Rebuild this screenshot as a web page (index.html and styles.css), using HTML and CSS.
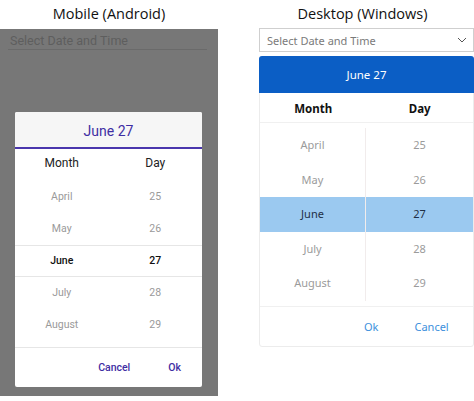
FILE: index.html
```html
<!DOCTYPE html>
<html>
<head>
<meta charset="utf-8">
<link rel="stylesheet" href="styles.css">
</head>
<body>
<div class="page">
  <section class="col mobile">
    <h2 class="title">Mobile (Android)</h2>
    <div class="screen">
      <div class="m-input">Select Date and Time</div>
      <div class="m-dialog">
        <div class="m-head">June 27</div>
        <div class="m-cols"><span>Month</span><span>Day</span></div>
        <div class="m-list">
          <div class="m-row"><span>April</span><span>25</span></div>
          <div class="m-row"><span>May</span><span>26</span></div>
          <div class="m-row sel"><span>June</span><span>27</span></div>
          <div class="m-row"><span>July</span><span>28</span></div>
          <div class="m-row"><span>August</span><span>29</span></div>
        </div>
        <div class="m-foot"><span>Cancel</span><span>Ok</span></div>
      </div>
    </div>
  </section>
  <section class="col desktop">
    <h2 class="title">Desktop (Windows)</h2>
    <div class="d-input">
      <span>Select Date and Time</span>
      <svg class="chev" width="10" height="6" viewBox="0 0 10 6"><path d="M1 1l4 4 4-4" fill="none" stroke="#555" stroke-width="1"/></svg>
    </div>
    <div class="d-dialog">
      <div class="d-head">June 27</div>
      <div class="d-cols"><span>Month</span><span>Day</span></div>
      <div class="d-list">
        <div class="d-col left">
          <div class="d-cell">April</div>
          <div class="d-cell">May</div>
          <div class="d-cell sel">June</div>
          <div class="d-cell">July</div>
          <div class="d-cell">August</div>
        </div>
        <div class="d-col">
          <div class="d-cell">25</div>
          <div class="d-cell">26</div>
          <div class="d-cell sel">27</div>
          <div class="d-cell">28</div>
          <div class="d-cell">29</div>
        </div>
      </div>
      <div class="d-foot"><span>Ok</span><span>Cancel</span></div>
    </div>
  </section>
</div>
</body>
</html>
```

FILE: styles.css
```css
* { box-sizing: border-box; margin: 0; padding: 0; }
html, body { width: 474px; height: 401px; background: #fff; overflow: hidden; }
body { font-family: "Noto Sans", sans-serif; }

.page { display: flex; gap: 41px; }

.col { display: flex; flex-direction: column; }
.mobile { width: 218px; }
.desktop { width: 215px; }

.title {
  height: 29px;
  line-height: 28px;
  text-align: center;
  font-family: "Open Sans", sans-serif;
  font-weight: 400;
  font-size: 14.5px;
  color: #111;
}
.desktop .title { margin-left: -8px; }

/* ---------- Mobile ---------- */
.screen {
  height: 367px;
  background: #777;
  padding: 4px 11px 0 8px;
  font-family: Roboto, sans-serif;
}
.m-input {
  height: 17px;
  padding-left: 2px;
  font-size: 12.5px;
  line-height: 15px;
  color: #5e5e5e;
  border-bottom: 1px solid #6a6a6a;
}
.m-dialog {
  margin: 62px 0 0 7px;
  width: 187px;
  height: 275px;
  background: #fff;
  border-radius: 2px;
  display: flex;
  flex-direction: column;
}
.m-head {
  height: 37px;
  flex: none;
  background: #f6f6f6;
  border-bottom: 2px solid #4a36ad;
  border-radius: 2px 2px 0 0;
  color: #3f2ea3;
  font-size: 14px;
  text-align: center;
  line-height: 38px;
}
.m-cols, .m-row, .m-foot { display: flex; }
.m-cols span, .m-row span { flex: 1; text-align: center; }
.m-cols {
  height: 29px;
  flex: none;
  line-height: 29px;
  font-size: 12px;
  color: #222;
}
.m-list { padding-top: 3px; }
.m-row {
  height: 32px;
  line-height: 32px;
  font-size: 10.5px;
  color: #9a9a9a;
}
.m-row.sel {
  color: #111;
  font-weight: 500;
  border-top: 1px solid #e6e6e6;
  border-bottom: 1px solid #e6e6e6;
  line-height: 30px;
}
.m-foot {
  margin-top: 6px;
  border-top: 1px solid #e6e6e6;
  flex: 1;
  justify-content: flex-end;
  align-items: center;
  gap: 38px;
  padding: 0 21px 0 0;
  font-size: 10.5px;
  font-weight: 500;
  color: #3f2ea3;
}

/* ---------- Desktop ---------- */
.d-input {
  height: 24px;
  margin-top: -1px;
  border: 1px solid #cfcfcf;
  display: flex;
  align-items: center;
  justify-content: space-between;
  padding: 0 6px 0 7px;
  font-size: 11px;
  color: #7a7a7a;
}
.d-dialog {
  margin-top: 4px;
  height: 291px;
  border: 1px solid #ececec;
  border-radius: 3px;
  display: flex;
  flex-direction: column;
}
.d-head {
  height: 37px;
  flex: none;
  margin: -1px -1px 0 -1px;
  background: #0b5ec5;
  color: #fff;
  font-size: 11.5px;
  text-align: center;
  line-height: 37px;
  border-radius: 3px 3px 0 0;
}
.d-cols { display: flex; flex: none; height: 30px; line-height: 31px; border-bottom: 1px solid #f0f0f0; }
.d-cols span { flex: 1; text-align: center; font-weight: 700; font-size: 11.5px; color: #111; }
.d-list { display: flex; padding-top: 5px; }
.d-col { flex: 1; }
.d-col.left { flex: 0 0 106px; border-right: 1px solid #f1ecec; }
.d-cell {
  height: 34.5px;
  line-height: 34.5px;
  text-align: center;
  font-size: 11px;
  color: #9b9b9b;
}
.d-cell.sel { background: #9bc9f0; color: #1f2f45; }
.d-foot {
  margin-top: 5px;
  border-top: 1px solid #f0f0f0;
  flex: 1;
  display: flex;
  align-items: center;
  font-size: 11px;
  color: #3d8fdc;
}
.d-foot span:first-child { margin-left: 104px; }
.d-foot span:last-child { margin-left: 36px; }
```
